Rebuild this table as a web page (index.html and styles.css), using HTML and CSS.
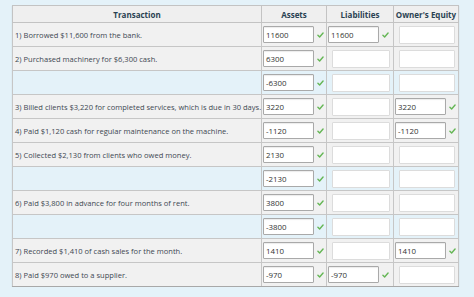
FILE: index.html
```html
<!DOCTYPE html>
<html>
<head>
<meta charset="utf-8">
<link rel="stylesheet" href="styles.css">
</head>
<body>
<table class="journal">
  <colgroup>
    <col class="c-tx"><col class="c-a"><col class="c-l"><col class="c-e">
  </colgroup>
  <thead>
    <tr><th>Transaction</th><th>Assets</th><th>Liabilities</th><th>Owner's Equity</th></tr>
  </thead>
  <tbody>
    <tr class="tx">
      <td class="desc">1) Borrowed $11,600 from the bank.</td>
      <td><div class="cell"><span class="inp">11600</span><svg class="ok" viewBox="0 0 8 7"><path d="M1 3.8 L3 5.8 L7 1.2"/></svg></div></td>
      <td><div class="cell"><span class="inp">11600</span><svg class="ok" viewBox="0 0 8 7"><path d="M1 3.8 L3 5.8 L7 1.2"/></svg></div></td>
      <td><div class="cell"><span class="inp empty"></span></div></td>
    </tr>
    <tr class="tx">
      <td class="desc">2) Purchased machinery for $6,300 cash.</td>
      <td><div class="cell"><span class="inp">6300</span><svg class="ok" viewBox="0 0 8 7"><path d="M1 3.8 L3 5.8 L7 1.2"/></svg></div></td>
      <td><div class="cell"><span class="inp empty"></span></div></td>
      <td><div class="cell"><span class="inp empty"></span></div></td>
    </tr>
    <tr class="blank">
      <td class="desc"></td>
      <td><div class="cell"><span class="inp">-6300</span><svg class="ok" viewBox="0 0 8 7"><path d="M1 3.8 L3 5.8 L7 1.2"/></svg></div></td>
      <td><div class="cell"><span class="inp empty"></span></div></td>
      <td><div class="cell"><span class="inp empty"></span></div></td>
    </tr>
    <tr class="tx">
      <td class="desc">3) Billed clients $3,220 for completed services, which is due in 30 days.</td>
      <td><div class="cell"><span class="inp">3220</span><svg class="ok" viewBox="0 0 8 7"><path d="M1 3.8 L3 5.8 L7 1.2"/></svg></div></td>
      <td><div class="cell"><span class="inp empty"></span></div></td>
      <td><div class="cell"><span class="inp">3220</span><svg class="ok" viewBox="0 0 8 7"><path d="M1 3.8 L3 5.8 L7 1.2"/></svg></div></td>
    </tr>
    <tr class="tx">
      <td class="desc">4) Paid $1,120 cash for regular maintenance on the machine.</td>
      <td><div class="cell"><span class="inp">-1120</span><svg class="ok" viewBox="0 0 8 7"><path d="M1 3.8 L3 5.8 L7 1.2"/></svg></div></td>
      <td><div class="cell"><span class="inp empty"></span></div></td>
      <td><div class="cell"><span class="inp">-1120</span><svg class="ok" viewBox="0 0 8 7"><path d="M1 3.8 L3 5.8 L7 1.2"/></svg></div></td>
    </tr>
    <tr class="tx">
      <td class="desc">5) Collected $2,130 from clients who owed money.</td>
      <td><div class="cell"><span class="inp">2130</span><svg class="ok" viewBox="0 0 8 7"><path d="M1 3.8 L3 5.8 L7 1.2"/></svg></div></td>
      <td><div class="cell"><span class="inp empty"></span></div></td>
      <td><div class="cell"><span class="inp empty"></span></div></td>
    </tr>
    <tr class="blank">
      <td class="desc"></td>
      <td><div class="cell"><span class="inp">-2130</span><svg class="ok" viewBox="0 0 8 7"><path d="M1 3.8 L3 5.8 L7 1.2"/></svg></div></td>
      <td><div class="cell"><span class="inp empty"></span></div></td>
      <td><div class="cell"><span class="inp empty"></span></div></td>
    </tr>
    <tr class="tx">
      <td class="desc">6) Paid $3,800 in advance for four months of rent.</td>
      <td><div class="cell"><span class="inp">3800</span><svg class="ok" viewBox="0 0 8 7"><path d="M1 3.8 L3 5.8 L7 1.2"/></svg></div></td>
      <td><div class="cell"><span class="inp empty"></span></div></td>
      <td><div class="cell"><span class="inp empty"></span></div></td>
    </tr>
    <tr class="blank">
      <td class="desc"></td>
      <td><div class="cell"><span class="inp">-3800</span><svg class="ok" viewBox="0 0 8 7"><path d="M1 3.8 L3 5.8 L7 1.2"/></svg></div></td>
      <td><div class="cell"><span class="inp empty"></span></div></td>
      <td><div class="cell"><span class="inp empty"></span></div></td>
    </tr>
    <tr class="tx">
      <td class="desc">7) Recorded $1,410 of cash sales for the month.</td>
      <td><div class="cell"><span class="inp">1410</span><svg class="ok" viewBox="0 0 8 7"><path d="M1 3.8 L3 5.8 L7 1.2"/></svg></div></td>
      <td><div class="cell"><span class="inp empty"></span></div></td>
      <td><div class="cell"><span class="inp">1410</span><svg class="ok" viewBox="0 0 8 7"><path d="M1 3.8 L3 5.8 L7 1.2"/></svg></div></td>
    </tr>
    <tr class="tx">
      <td class="desc">8) Paid $970 owed to a supplier.</td>
      <td><div class="cell"><span class="inp">-970</span><svg class="ok" viewBox="0 0 8 7"><path d="M1 3.8 L3 5.8 L7 1.2"/></svg></div></td>
      <td><div class="cell"><span class="inp">-970</span><svg class="ok" viewBox="0 0 8 7"><path d="M1 3.8 L3 5.8 L7 1.2"/></svg></div></td>
      <td><div class="cell"><span class="inp empty"></span></div></td>
    </tr>
  </tbody>
</table>
</body>
</html>
```
FILE: styles.css
```css
html, body {
  margin: 0;
  padding: 0;
  background: #e4f2f9;
}
body {
  padding: 5px 0 0 12px;
  font-family: "Open Sans", "Noto Sans", sans-serif;
  font-size: 7.55px;
  color: #3e4852;
}
.journal {
  border-collapse: collapse;
  table-layout: fixed;
  width: 446px;
  box-shadow: 0 1px 1px rgba(0,0,0,0.15);
}
.c-tx { width: 249px; }
.c-a { width: 65px; }
.c-l { width: 67px; }
.c-e { width: 65px; }
.journal th {
  height: 16px;
  padding: 0;
  background: #efefef;
  border: 1px solid #c3c3c3;
  font-weight: 700;
  color: #2a4252;
  font-size: 8px;
  text-align: center;
  vertical-align: middle;
}
.journal td {
  height: 23px;
  padding: 0;
  border: 1px solid #c6c6c6;
  vertical-align: middle;
}
.journal tbody tr:last-child td {
  border-bottom-color: #a8a8a8;
}
.tx td { background: #f1f1f1; }
.blank td { background: #e4f2f9; }
.desc {
  padding-left: 2px !important;
  white-space: nowrap;
  overflow: hidden;
}
.cell {
  display: flex;
  align-items: center;
  padding-left: 1px;
}
.inp {
  box-sizing: border-box;
  display: flex;
  align-items: center;
  width: 51px;
  height: 17px;
  padding-left: 2px;
  background: #fff;
  border: 1px solid #a9a9a9;
  border-radius: 1px;
  box-shadow: inset 0 1px 1px rgba(0,0,0,0.08);
  font-size: 7.9px;
  color: #333;
}
.inp.empty {
  flex: 1;
  height: 18px;
  margin: 0 3px 0 4px;
  border-color: #dcdcdc;
  box-shadow: none;
}
.ok {
  width: 7px;
  height: 6px;
  margin-left: 2.5px;
  fill: none;
  stroke: #64b654;
  stroke-width: 1.6;
  stroke-linecap: round;
  stroke-linejoin: round;
}
```
